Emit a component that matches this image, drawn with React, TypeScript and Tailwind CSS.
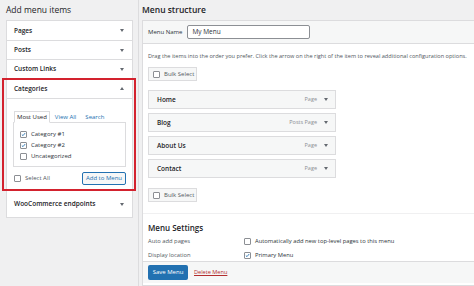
import React from "react";

const font = { fontFamily: '"Open Sans", "Noto Sans", Arial, sans-serif' };

function Arrow({ up = false }: { up?: boolean }) {
  return (
    <svg width="4" height="3" viewBox="0 0 4 3" className="shrink-0">
      {up ? <path d="M0 3 L2 0 L4 3 Z" fill="#646970" /> : <path d="M0 0 L4 0 L2 3 Z" fill="#646970" />}
    </svg>
  );
}

function Check({ checked = false }: { checked?: boolean }) {
  return (
    <span className="w-[7px] h-[7px] border border-[#8c8f94] rounded-[1px] bg-white flex items-center justify-center shrink-0">
      {checked && (
        <svg width="7" height="7" viewBox="0 0 7 7">
          <path d="M1.2 3.6 L2.8 5.1 L5.9 1.4" stroke="#2271b1" strokeWidth="1.2" fill="none" />
        </svg>
      )}
    </span>
  );
}

function AccRow({ label, className = "" }: { label: string; className?: string }) {
  return (
    <div className={`flex items-center justify-between pl-[7px] pr-[8px] border-b border-[#dcdcde] ${className}`}>
      <span className="text-[6.5px] font-semibold text-[#1d2327]">{label}</span>
      <Arrow />
    </div>
  );
}

function MenuItem({ label, type }: { label: string; type: string }) {
  return (
    <div className="w-[188px] h-[19px] bg-[#f6f7f7] border border-[#dcdcde] flex items-center justify-between pl-[8px] pr-[7px]">
      <span className="text-[6.5px] font-semibold text-[#1d2327]">{label}</span>
      <span className="flex items-center gap-[7px]">
        <span className="text-[5.5px] text-[#8c8f94]">{type}</span>
        <Arrow />
      </span>
    </div>
  );
}

function BulkSelect() {
  return (
    <div className="w-[49px] h-[14px] border border-[#dcdcde] bg-[#f6f7f7] flex items-center gap-[4px] pl-[4px]">
      <Check />
      <span className="text-[6px] text-[#50575e]">Bulk Select</span>
    </div>
  );
}

export default function App() {
  return (
    <div className="w-[474px] h-[286px] bg-[#f0f0f1] flex overflow-hidden" style={font}>
      {/* left column */}
      <div className="w-[138px] shrink-0 pl-[6px] pr-[5px] flex flex-col">
        <div className="h-[20px] flex items-center text-[8.5px] text-[#1d2327]">Add menu items</div>
        <div className="bg-white border border-[#dcdcde] border-b-0 flex flex-col">
          <AccRow label="Pages" className="h-[20px]" />
          <AccRow label="Posts" className="h-[19px]" />
          <AccRow label="Custom Links" className="h-[19px]" />
          <div className="relative border-b border-[#dcdcde]">
            <div className="flex items-center justify-between pl-[7px] pr-[8px] h-[20px] border-b border-[#dcdcde]">
              <span className="text-[6.5px] font-semibold text-[#1d2327]">Categories</span>
              <Arrow up />
            </div>
            <div className="px-[6px] pt-[12px] pb-[5px]">
              <div className="flex items-end gap-[4px] text-[6px] relative z-10">
                <span className="h-[12px] px-[2px] border border-[#dcdcde] border-b-white bg-white text-[#1d2327] flex items-center ml-[1px]">
                  Most Used
                </span>
                <span className="h-[12px] flex items-center text-[#2271b1] px-[1px]">View All</span>
                <span className="h-[12px] flex items-center text-[#2271b1] px-[4px]">Search</span>
              </div>
              <div className="-mt-px h-[45px] border border-[#dcdcde] bg-white flex flex-col gap-[4px] pt-[8px] pl-[6px] text-[6px] text-[#2c3338]">
                <div className="flex items-center gap-[4px] h-[7px]">
                  <Check checked />
                  <span>Category #1</span>
                </div>
                <div className="flex items-center gap-[4px] h-[7px]">
                  <Check checked />
                  <span>Category #2</span>
                </div>
                <div className="flex items-center gap-[4px] h-[7px]">
                  <Check />
                  <span>Uncategorized</span>
                </div>
              </div>
              <div className="flex items-center justify-between mt-[5px] pl-[1px]">
                <div className="flex items-center gap-[4px] text-[6px] text-[#50575e]">
                  <Check />
                  <span>Select All</span>
                </div>
                <div className="h-[13px] w-[44px] border border-[#2271b1] rounded-[2px] bg-[#f6f7f7] text-[#2271b1] text-[6px] flex items-center justify-center">
                  Add to Menu
                </div>
              </div>
            </div>
            <div className="absolute top-[-1px] bottom-[-1px] left-[-5px] right-[-4px] border-2 border-[#d3222e] pointer-events-none" />
          </div>
          <AccRow label="WooCommerce endpoints" className="h-[27px]" />
        </div>
      </div>

      {/* right column */}
      <div className="flex-1 border-l border-[#dcdcde] pl-[3px] flex flex-col min-w-0">
        <div className="h-[20px] flex items-center text-[8.5px] font-semibold text-[#1d2327]">Menu structure</div>
        <div className="w-[340px] h-[266px] border border-[#dcdcde] bg-white flex flex-col">
          <div className="h-[23px] shrink-0 bg-[#f6f7f7] border-b border-[#dcdcde] flex items-center pl-[5px] gap-[5px]">
            <span className="text-[6px] text-[#2c3338]">Menu Name</span>
            <div className="w-[123px] h-[14px] border border-[#8c8f94] rounded-[2px] bg-white flex items-center pl-[4px] text-[6.5px] text-[#2c3338]">
              My Menu
            </div>
          </div>
          <div className="h-[217px] shrink-0 pl-[5px] pt-[8px] flex flex-col overflow-hidden">
            <div className="text-[5.6px] text-[#50575e] whitespace-nowrap leading-[8px]">
              Drag the items into the order you prefer. Click the arrow on the right of the item to reveal additional configuration options.
            </div>
            <div className="mt-[7px]">
              <BulkSelect />
            </div>
            <div className="mt-[9px] flex flex-col gap-[4px]">
              <MenuItem label="Home" type="Page" />
              <MenuItem label="Blog" type="Posts Page" />
              <MenuItem label="About Us" type="Page" />
              <MenuItem label="Contact" type="Page" />
            </div>
            <div className="mt-[10px]">
              <BulkSelect />
            </div>
            <div className="mt-[11px] -ml-[5px] border-t border-[#f0f0f1]" />
            <div className="mt-[8px] text-[8px] font-semibold text-[#1d2327]">Menu Settings</div>
            <div className="mt-[4px] flex flex-col gap-[7px] text-[5.8px]">
              <div className="flex items-center h-[7px]">
                <span className="w-[96px] text-[#50575e]">Auto add pages</span>
                <span className="flex items-center gap-[4px] text-[#2c3338]">
                  <Check />
                  Automatically add new top-level pages to this menu
                </span>
              </div>
              <div className="flex items-center h-[7px]">
                <span className="w-[96px] text-[#50575e]">Display location</span>
                <span className="flex items-center gap-[4px] text-[#2c3338]">
                  <Check checked />
                  Primary Menu
                </span>
              </div>
              <div className="flex items-center h-[7px]">
                <span className="w-[96px]" />
                <Check />
              </div>
            </div>
          </div>
          <div className="h-[22px] shrink-0 bg-[#f6f7f7] border-t border-[#dcdcde] flex items-center pl-[5px] gap-[6px]">
            <div className="h-[15px] w-[40px] bg-[#2271b1] rounded-[2px] text-white text-[6px] flex items-center justify-center">
              Save Menu
            </div>
            <span className="text-[5.6px] text-[#b32d2e] underline">Delete Menu</span>
          </div>
        </div>
      </div>
    </div>
  );
}
